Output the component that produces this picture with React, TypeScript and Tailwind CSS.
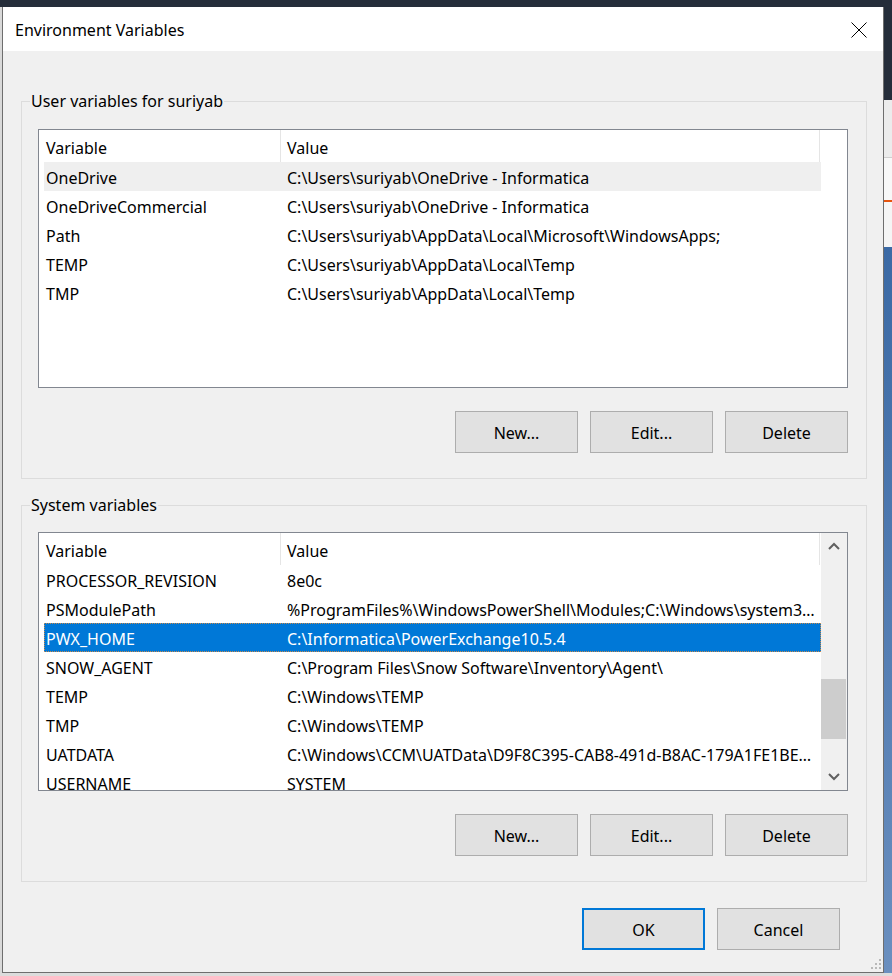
import React from 'react';

type Row = { name: string; value: string; state?: 'hover' | 'selected' };

const userVars: Row[] = [
  { name: 'OneDrive', value: 'C:\\Users\\suriyab\\OneDrive - Informatica', state: 'hover' },
  { name: 'OneDriveCommercial', value: 'C:\\Users\\suriyab\\OneDrive - Informatica' },
  { name: 'Path', value: 'C:\\Users\\suriyab\\AppData\\Local\\Microsoft\\WindowsApps;' },
  { name: 'TEMP', value: 'C:\\Users\\suriyab\\AppData\\Local\\Temp' },
  { name: 'TMP', value: 'C:\\Users\\suriyab\\AppData\\Local\\Temp' },
];

const systemVars: Row[] = [
  { name: 'PROCESSOR_REVISION', value: '8e0c' },
  {
    name: 'PSModulePath',
    value: '%ProgramFiles%\\WindowsPowerShell\\Modules;C:\\Windows\\system32\\WindowsPowerShell\\v1.0\\Modules',
  },
  { name: 'PWX_HOME', value: 'C:\\Informatica\\PowerExchange10.5.4', state: 'selected' },
  { name: 'SNOW_AGENT', value: 'C:\\Program Files\\Snow Software\\Inventory\\Agent\\' },
  { name: 'TEMP', value: 'C:\\Windows\\TEMP' },
  { name: 'TMP', value: 'C:\\Windows\\TEMP' },
  { name: 'UATDATA', value: 'C:\\Windows\\CCM\\UATData\\D9F8C395-CAB8-491d-B8AC-179A1FE1BE77' },
  { name: 'USERNAME', value: 'SYSTEM' },
];

const VarRow: React.FC<{ row: Row }> = ({ row }) => {
  // selected row keeps the dotted focus rectangle, hovered row is light gray
  const look =
    row.state === 'selected'
      ? 'bg-[#0078d7] text-white outline-1 outline-dotted outline-[#c98a4b] -outline-offset-1'
      : row.state === 'hover'
        ? 'bg-[#efefef]'
        : '';
  return (
    <div className={`ml-[5px] flex h-[29px] w-[777px] shrink-0 items-center pt-[2px] ${look}`}>
      <div className="w-[237px] shrink-0 truncate pl-[2px]">{row.name}</div>
      <div className="min-w-0 flex-1 truncate pl-[6px] pr-[6px]">{row.value}</div>
    </div>
  );
};

const Chevron: React.FC<{ down?: boolean }> = ({ down }) => (
  <svg width="12" height="8" viewBox="0 0 12 8" fill="none">
    <polyline
      points={down ? '1,1 6,6 11,1' : '1,7 6,2 11,7'}
      stroke="#606060"
      strokeWidth="2"
    />
  </svg>
);

const ScrollBar: React.FC = () => (
  <div className="flex w-[26px] shrink-0 flex-col bg-[#f0f0f0]">
    <div className="flex h-[26px] items-center justify-center">
      <Chevron />
    </div>
    <div className="flex-1 pt-[120px]">
      <div className="h-[60px] w-[25px] bg-[#cdcdcd]" />
    </div>
    <div className="flex h-[26px] items-center justify-center">
      <Chevron down />
    </div>
  </div>
);

const VarList: React.FC<{ rows: Row[]; scrollbar?: boolean }> = ({ rows, scrollbar }) => (
  <div className="flex h-[259px] w-[810px] overflow-hidden border border-[#828790] bg-white">
    <div className="flex w-[782px] shrink-0 flex-col overflow-hidden">
      <div className="flex h-[32px] shrink-0">
        <div className="flex w-[242px] items-center border-r border-[#e5e5e5] pl-[7px] pt-[3px]">Variable</div>
        <div className="flex w-[539px] items-center border-r border-[#e5e5e5] pl-[6px] pt-[3px]">Value</div>
      </div>
      {rows.map((r) => (
        <VarRow key={r.name + r.value} row={r} />
      ))}
    </div>
    {scrollbar && <ScrollBar />}
  </div>
);

const WinButton: React.FC<{ label: string; primary?: boolean }> = ({ label, primary }) => (
  <button
    className={`flex h-[42px] w-[123px] items-center justify-center bg-[#e1e1e1] pt-[1px] ${
      primary ? 'border-2 border-[#0078d7]' : 'border border-[#adadad]'
    }`}
  >
    {label}
  </button>
);

const GroupBox: React.FC<{ label: string; rows: Row[]; scrollbar?: boolean; className: string }> = ({
  label,
  rows,
  scrollbar,
  className,
}) => (
  <div className={`relative w-[846px] border border-[#dcdcdc] pl-[16px] ${className}`}>
    <span className="absolute left-[8px] top-[-12px] bg-[#f0f0f0] px-[1px] leading-[22px]">{label}</span>
    <VarList rows={rows} scrollbar={scrollbar} />
    <div className="mt-[23px] flex w-[810px] justify-end gap-[12px]">
      <WinButton label="New..." />
      <WinButton label="Edit..." />
      <WinButton label="Delete" />
    </div>
  </div>
);

const SizeGrip: React.FC = () => (
  <svg className="absolute bottom-[3px] right-[2px]" width="10" height="10" viewBox="0 0 10 10">
    <rect x="8" y="0" width="2" height="2" fill="#b8b8b8" />
    <rect x="4" y="4" width="2" height="2" fill="#b8b8b8" />
    <rect x="8" y="4" width="2" height="2" fill="#b8b8b8" />
    <rect x="0" y="8" width="2" height="2" fill="#b8b8b8" />
    <rect x="4" y="8" width="2" height="2" fill="#b8b8b8" />
    <rect x="8" y="8" width="2" height="2" fill="#b8b8b8" />
  </svg>
);

const App: React.FC = () => {
  return (
    <div className="flex h-[976px] w-[892px] flex-col overflow-hidden bg-[#252d3a] font-['Noto_Sans',sans-serif] text-[16px] text-black">
      {/* desktop strip above the dialog */}
      <div className="h-[7px] shrink-0" />

      <div className="flex h-[966px] shrink-0">
        <div className="w-[2px] shrink-0 bg-[#d9d9d9]" />

        {/* dialog */}
        <div className="relative flex w-[882px] shrink-0 flex-col border-x border-b border-[#6e6e6e] bg-[#f0f0f0]">
          <div className="flex h-[44px] shrink-0 items-center justify-between bg-white pl-[12px] pr-[16px] pt-[2px]">
            <span>Environment Variables</span>
            <svg width="16" height="16" viewBox="0 0 16 16">
              <path d="M0.5 0.5 L15.5 15.5 M15.5 0.5 L0.5 15.5" stroke="#000" strokeWidth="1" />
            </svg>
          </div>

          <div className="flex flex-1 flex-col pt-[50px]">
            <GroupBox className="ml-[18px] h-[378px] pt-[27px]" label="User variables for suriyab" rows={userVars} />
            <GroupBox
              className="ml-[18px] mt-[26px] h-[377px] pt-[26px]"
              label="System variables"
              rows={systemVars}
              scrollbar
            />
            <div className="mt-[26px] flex justify-end gap-[12px] pr-[43px]">
              <WinButton label="OK" primary />
              <WinButton label="Cancel" />
            </div>
          </div>
          <SizeGrip />
        </div>

        {/* sliver of the window behind */}
        <div className="flex w-[8px] shrink-0 flex-col">
          <div className="h-[93px] shrink-0 bg-[#252d3a]" />
          <div className="h-[57px] shrink-0 bg-[#ececec]" />
          <div className="h-[1px] shrink-0 bg-[#cfcfcf]" />
          <div className="h-[42px] shrink-0 bg-[#f8f8f8]" />
          <div className="h-[2px] shrink-0 bg-[#e5540f]" />
          <div className="h-[45px] shrink-0 bg-[#f5f5f5]" />
          <div className="flex-1 bg-gradient-to-b from-[#3b6aa5] to-[#6a8fbf]" />
        </div>
      </div>

      <div className="h-[3px] shrink-0 bg-[#dcdcdc]" />
    </div>
  );
};

export default App;
